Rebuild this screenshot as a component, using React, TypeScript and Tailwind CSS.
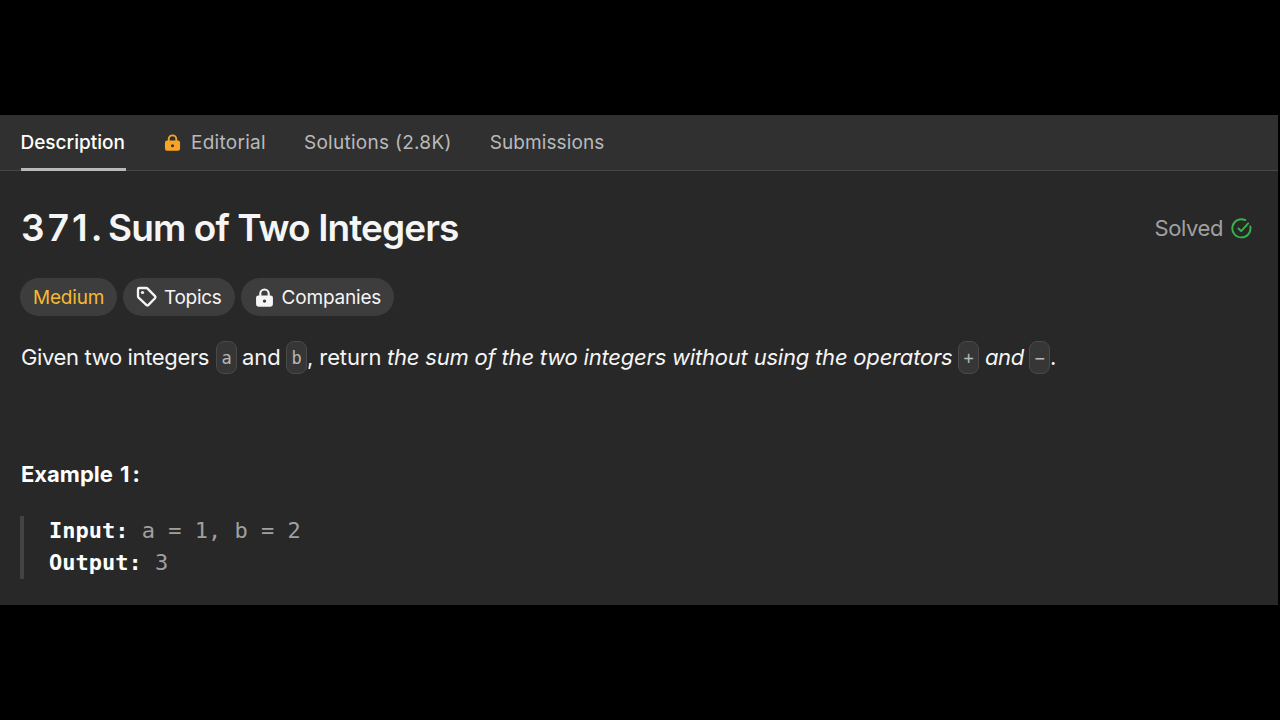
import React from 'react';

const tabs = [
  { label: 'Solutions (2.8K)', className: 'ml-[38px] tracking-[0.280px]' },
  { label: 'Submissions', className: 'ml-[38px] tracking-[0.1px]' },
];

function LockIcon({ className }: { className: string }) {
  return (
    <svg className={className} viewBox="0 0 18 18" fill="currentColor">
      <path
        fillRule="evenodd"
        d="M4 7V5.4a5 5 0 0 1 10 0V7h.8A2.2 2.2 0 0 1 17 9.200v6.300a2.200 2.200 0 0 1-2.200 2.200H3.200A2.200 2.200 0 0 1 1 15.500V9.200A2.200 2.200 0 0 1 3.200 7H4Zm2 0h6V5.400a3 3 0 0 0-6 0V7Zm3 3.800a1.600 1.600 0 1 0 0 3.200 1.600 1.600 0 0 0 0-3.200Z"
      />
    </svg>
  );
}

function TagIcon() {
  return (
    <svg className="h-[22px] w-[22px] shrink-0" viewBox="0 0 22 22" fill="none">
      <path
        d="M2 3.200A1.200 1.200 0 0 1 3.200 2h7a2 2 0 0 1 1.400.6l7.400 7.500a1.500 1.500 0 0 1 0 2.100l-6.500 6.700a1.500 1.500 0 0 1-2.200 0L2.600 11.700a2 2 0 0 1-.6-1.400V3.200Z"
        stroke="currentColor"
        strokeWidth="2.300"
        strokeLinejoin="round"
      />
      <circle cx="6.500" cy="6.500" r="1.600" fill="currentColor" />
    </svg>
  );
}

function SolvedIcon() {
  return (
    <svg className="ml-[8px] h-[21px] w-[21px]" viewBox="0 0 21 21" fill="none" stroke="#38b34c" strokeWidth="1.900" strokeLinecap="round" strokeLinejoin="round">
      <path d="M14.300 2.100A9.100 9.100 0 1 0 19.300 8.400" />
      <path d="M7.500 10.500l2.700 2.600 7-7.700" />
    </svg>
  );
}

function Code({ children }: { children: React.ReactNode }) {
  return (
    <code className="inline-flex h-[33px] w-[21px] shrink-0 items-center justify-center rounded-[8px] border-[1.500px] border-[#4a4a4a] bg-[#363636] pt-[2px] font-['DejaVu_Sans_Mono',monospace] text-[17px] text-[#b8b8b8] not-italic">
      {children}
    </code>
  );
}

export default function App() {
  return (
    <div className="flex h-screen w-full flex-col overflow-hidden bg-black py-[115px] font-['Inter',sans-serif]">
      <div className="mr-[2px] flex h-[490px] flex-col bg-[#282828]">
        {/* Tab bar */}
        <nav className="flex h-[56px] shrink-0 border-b border-[#484848] bg-[#303030] pl-[20.500px] text-[19px] leading-[55px] font-normal whitespace-nowrap text-[#b9b9bb]">
          <div className="h-[56px] w-[105px] border-b-[3px] border-[#b9b9b9] font-medium text-white">
            Description
          </div>
          <div className="ml-[38.500px] flex items-center tracking-[0.280px]">
            <LockIcon className="mr-[10px] h-[17px] w-[17px] text-[#f7a325]" />
            Editorial
          </div>
          {tabs.map((tab) => (
            <div key={tab.label} className={tab.className}>
              {tab.label}
            </div>
          ))}
        </nav>

        {/* Title */}
        <div className="mt-[32px] flex h-[50px] items-center justify-between pl-[21px] pr-[26px]">
          <h1 className="flex text-[37px] leading-[50px] font-semibold whitespace-nowrap text-[#f5f5f5]">
            <span className="w-[87px] tracking-[3.100px]">371.</span>
            <span className="tracking-[-0.900px]">Sum of Two Integers</span>
          </h1>
          <div className="flex items-center text-[22px] tracking-[-0.400px] text-[#a0a0a0]">
            Solved
            <SolvedIcon />
          </div>
        </div>

        {/* Tags */}
        <div className="mt-[25px] flex h-[38px] gap-[6px] pl-[20px] text-[19px] leading-[38px] whitespace-nowrap text-[#f5f5f5]">
          <div className="w-[97px] rounded-full bg-[#3d3d3d] pt-px pl-[13px] tracking-[-0.200px] text-[#f5b932]">Medium</div>
          <div className="flex w-[112px] items-center gap-[6.500px] rounded-full bg-[#3d3d3d] pl-[12.500px] tracking-[-0.280px]">
            <TagIcon />
            <span className="pt-px">Topics</span>
          </div>
          <div className="flex w-[153px] items-center gap-[7.500px] rounded-full bg-[#3d3d3d] pl-[14px] tracking-[-0.180px]">
            <LockIcon className="h-[19px] w-[19px] shrink-0" />
            <span className="pt-px">Companies</span>
          </div>
        </div>

        {/* Statement */}
        <p className="mt-[25px] flex h-[33px] items-center pl-[21px] text-[22px] whitespace-nowrap text-[#f5f5f5]">
          <span className="w-[195px] tracking-[-0.360px]">Given two integers</span>
          <Code>a</Code>
          <span className="w-[49px] pl-[5px]">and</span>
          <Code>b</Code>
          <span className="w-[80px] tracking-[-0.100px]">, return</span>
          <em className="w-[571px] tracking-[-0.200px]">the sum of the two integers without using the operators</em>
          <Code>+</Code>
          <em className="w-[50px] pl-[6px] tracking-[-0.400px]">and</em>
          <Code>−</Code>
          <span>.</span>
        </p>

        {/* Example */}
        <h2 className="mt-[84px] pl-[21px] text-[22px] leading-[32px] font-bold text-white">
          Example <span className="ml-[2px] tracking-[3px]">1:</span>
        </h2>
        <pre className="mt-[26px] ml-[20px] h-[63px] border-l-[4px] border-[#434343] pl-[25px] font-['DejaVu_Sans_Mono',monospace] text-[22px] leading-[31.500px] text-[#a0a0a0]">
          <div className="-mt-px">
            <strong className="text-white">Input:</strong> a = 1, b = 2
          </div>
          <div>
            <strong className="text-white">Output:</strong> 3
          </div>
        </pre>
      </div>
    </div>
  );
}
